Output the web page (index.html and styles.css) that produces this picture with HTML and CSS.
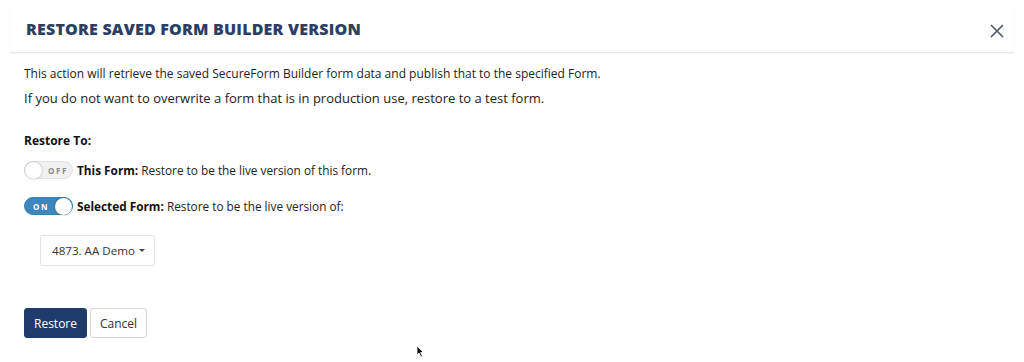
FILE: index.html
```html
<!DOCTYPE html>
<html lang="en">
<head>
  <meta charset="UTF-8">
  <title>Restore Saved Form Builder Version</title>
  <link rel="stylesheet" href="styles.css">
</head>
<body>

  <div class="modal">
    <div class="modal-header">
      <h2 class="modal-title">RESTORE SAVED FORM BUILDER VERSION</h2>
      <button class="close-btn" aria-label="Close">
        <svg width="16" height="16" viewBox="0 0 16 16"><path d="M2 2 L14 14 M14 2 L2 14" stroke="#4a5568" stroke-width="1.6" fill="none"/></svg>
      </button>
    </div>

    <div class="modal-body">
      <p class="intro">This action will retrieve the saved SecureForm Builder form data and publish that to the specified Form.</p>
      <p class="intro big">If you do not want to overwrite a form that is in production use, restore to a test form.</p>

      <div class="label">Restore To:</div>

      <div class="option">
        <span class="switch off"><span class="knob"></span><span class="switch-text">OFF</span></span>
        <span><b>This Form:</b> Restore to be the live version of this form.</span>
      </div>

      <div class="option">
        <span class="switch on"><span class="switch-text">ON</span><span class="knob"></span></span>
        <span><b>Selected Form:</b> Restore to be the live version of:</span>
      </div>

      <div class="select-wrap">
        <button class="dropdown">4873. AA Demo <span class="caret"></span></button>
      </div>

      <div class="actions">
        <button class="btn btn-primary">Restore</button>
        <button class="btn btn-default">Cancel</button>
      </div>
    </div>
  </div>

  <!-- mouse pointer in the capture -->
  <svg class="cursor" width="9" height="13" viewBox="0 0 9 13"><path d="M1 1 L1 10 L3 8 L5 12 L6.5 11.3 L4.6 7.5 L7.5 7.5 Z" fill="#111" stroke="#fff" stroke-width="0.8"/></svg>

</body>
</html>
```

FILE: styles.css
```css
body {
  margin: 0;
  background-color: #fff;
  font-family: 'Open Sans', 'Liberation Sans', sans-serif;
  color: #222;
  position: relative;
  height: 362px;
  overflow: hidden;
}

.modal {
  padding: 0 10px;
}

.modal-header {
  display: flex;
  align-items: center;
  justify-content: space-between;
  height: 52px;
  border-bottom: 1px solid #e6e8ec;
  padding: 0 3px 0 16px;
  box-shadow: 0 1px 2px rgba(0, 0, 0, 0.04);
}

.modal-title {
  margin: 0;
  padding-top: 6px;
  font-family: 'Open Sans', 'Liberation Sans', sans-serif;
  font-size: 16px;
  font-weight: 800;
  color: #2c3e63;
  letter-spacing: 0.2px;
}

.close-btn {
  background: none;
  border: none;
  padding: 0;
  margin-top: 10px;
  width: 28px;
  height: 28px;
  display: flex;
  align-items: center;
  justify-content: center;
}

.modal-body {
  padding: 13px 0 0 14px;
}

.intro {
  margin: 0;
  font-size: 12px;
  line-height: 16px;
  color: #222;
}

.intro.big {
  font-size: 13px;
  margin-top: 8px;
}

.label {
  margin-top: 26px;
  font-size: 12px;
  font-weight: 700;
  color: #111;
}

.option {
  display: flex;
  align-items: center;
  gap: 4px;
  margin-top: 12px;
  font-size: 11.8px;
  color: #222;
}

.option + .option {
  margin-top: 18px;
}

.option b {
  font-weight: 700;
  color: #111;
}

.switch {
  display: inline-flex;
  align-items: center;
  width: 49px;
  height: 18px;
  border-radius: 9px;
  box-sizing: border-box;
}

.switch.off {
  background-color: #f1f1f1;
  border: 1px solid #e2e2e2;
}

.switch.on {
  background-color: #3e86bc;
  border: 1px solid #3a7fb2;
  justify-content: space-between;
}

.knob {
  width: 17px;
  height: 17px;
  border-radius: 50%;
  background-color: #fff;
  box-shadow: 0 0 2px rgba(0, 0, 0, 0.35);
}

.switch-text {
  font-size: 8px;
  font-weight: 700;
  letter-spacing: 1.6px;
}

.switch.off .switch-text {
  color: #888;
  margin-left: 6px;
}

.switch.on .switch-text {
  color: #fff;
  margin-left: 8px;
}

.select-wrap {
  margin-top: 20px;
  padding-left: 16px;
}

.dropdown {
  font-family: inherit;
  font-size: 11.6px;
  color: #333;
  background-color: #fff;
  border: 1px solid #e3e3e3;
  border-radius: 2px;
  height: 31px;
  padding: 0 9px 0 11px;
  display: inline-flex;
  align-items: center;
  gap: 4px;
}

.caret {
  display: inline-block;
  width: 0;
  height: 0;
  border-left: 3px solid transparent;
  border-right: 3px solid transparent;
  border-top: 3px solid #444;
}

.actions {
  display: flex;
  gap: 3px;
  margin-top: 42px;
}

.btn {
  font-family: inherit;
  font-size: 12px;
  height: 30px;
  border-radius: 3px;
  padding: 0 9px;
}

.btn-primary {
  background-color: #1f3b6b;
  border: 1px solid #1f3b6b;
  color: #fff;
}

.btn-default {
  background-color: #fff;
  border: 1px solid #d6d6d6;
  color: #333;
}

.cursor {
  position: absolute;
  left: 416px;
  top: 345px;
}
```
